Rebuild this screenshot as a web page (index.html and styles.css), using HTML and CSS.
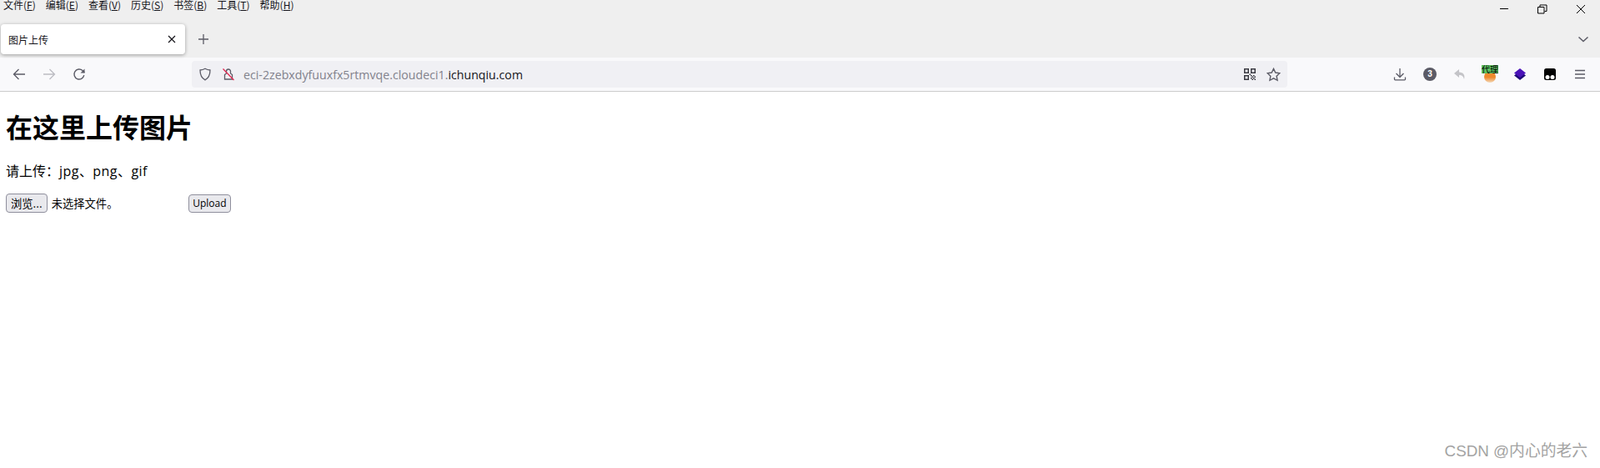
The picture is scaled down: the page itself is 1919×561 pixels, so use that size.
FILE: index.html
```html
<!DOCTYPE html>
<html lang="zh-CN">
<head>
    <meta charset="UTF-8">
    <title>图片上传</title>
    <link rel="stylesheet" href="styles.css">
</head>
<body>
    <header class="browser">
        <div class="menu-row">
            <nav class="menu">
                <span>文件(<u>F</u>)</span>
                <span>编辑(<u>E</u>)</span>
                <span>查看(<u>V</u>)</span>
                <span>历史(<u>S</u>)</span>
                <span>书签(<u>B</u>)</span>
                <span>工具(<u>T</u>)</span>
                <span>帮助(<u>H</u>)</span>
            </nav>
            <div class="win-controls">
                <svg width="12" height="12" viewBox="0 0 12 12"><path d="M1 5.500h10" stroke="#000" stroke-width="1" fill="none"/></svg>
                <svg width="12" height="12" viewBox="0 0 12 12" fill="none" stroke="#000"><path d="M.5 3.500h7.500v7.500h-7.500zM3 3V1h8v7.500H8.500"/></svg>
                <svg width="12" height="12" viewBox="0 0 12 12"><path d="M1 1l10 10M11 1L1 11" stroke="#000" fill="none"/></svg>
            </div>
        </div>
        <div class="tab-row">
            <div class="tab">
                <span class="tab-title">图片上传</span>
                <svg width="12" height="12" viewBox="0 0 12 12"><path d="M2 2l8 8M10 2l-8 8" stroke="#15141a" stroke-width="1.200" fill="none"/></svg>
            </div>
            <svg class="new-tab" width="14" height="14" viewBox="0 0 14 14"><path d="M7 1v12M1 7h12" stroke="#5b5b66" stroke-width="1.300" fill="none"/></svg>
            <svg class="tab-list" width="14" height="14" viewBox="0 0 14 14"><path d="M1.500 4.500L7 9.500l5.500-5" stroke="#5b5b66" stroke-width="1.500" fill="none"/></svg>
        </div>
        <div class="toolbar">
            <div class="nav-buttons">
                <svg width="16" height="16" viewBox="0 0 16 16" fill="none" stroke="#5b5b66" stroke-width="1.300"><path d="M15 8H1.500M7.500 2l-6 6 6 6"/></svg>
                <svg width="16" height="16" viewBox="0 0 16 16" fill="none" stroke="#bcbcc2" stroke-width="1.300"><path d="M1 8h13.500M8.500 2l6 6-6 6"/></svg>
                <svg width="16" height="16" viewBox="0 0 16 16" fill="none" stroke="#5b5b66" stroke-width="1.400"><path d="M13.800 9.200A6 6 0 1 1 12 3.600L14.500 6"/><path d="M14.500 1.500V6.500H9.500" fill="#5b5b66" stroke="none"/></svg>
            </div>
            <div class="urlbar">
                <svg width="16" height="16" viewBox="0 0 16 16" fill="none" stroke="#5b5b66" stroke-width="1.300"><path d="M8 1.200c2 1.200 4 1.700 6 1.800 0 5.500-1.500 9.500-6 11.800C3.500 12.500 2 8.500 2 3c2-.1 4-.6 6-1.800z"/></svg>
                <svg class="lock" width="16" height="16" viewBox="0 0 16 16" fill="none"><path d="M5.500 7V4.500a2.500 2.500 0 0 1 5 0V7l2 1.500V14h-9V8.500z" stroke="#5b5b66" stroke-width="1.300"/><path d="M1.500 1.500l13 13.500" stroke="#e22850" stroke-width="1.300"/></svg>
                <span class="url"><span class="url-dim">eci-2zebxdyfuuxfx5rtmvqe.cloudeci1.</span>ichunqiu.com</span>
                <svg class="qr" width="14" height="14" viewBox="0 0 14 14"><path d="M0 0h6v6H0zM1.500 1.500v3h3v-3zM8 0h6v6H8zM9.500 1.500v3h3v-3zM0 8h6v6H0zM1.500 9.500v3h3v-3zM8 8h1.500v1.500H8zM11 8h1.500v1.500H11zM9.500 9.500H11V11H9.500zM12.500 9.500H14V11h-1.500zM8 11h1.500v1.500H8zM11 11h1.500v1.500H11zM9.500 12.500H11V14H9.500zM12.500 12.500H14V14h-1.500zM6.500 6.500H8V8H6.500z" fill="#3a3a42" fill-rule="evenodd"/></svg>
                <svg class="star" width="17" height="17" viewBox="0 0 16 16"><path d="M8 1.300l2.100 4.400 4.800.6-3.500 3.300.9 4.800L8 12.100l-4.300 2.300.9-4.800L1.100 6.300l4.800-.6z" fill="none" stroke="#5b5b66" stroke-width="1.300"/></svg>
            </div>
            <div class="tools">
                <svg width="16" height="16" viewBox="0 0 16 16" fill="none" stroke="#5b5b66" stroke-width="1.300"><path d="M8 1v10M3.500 7L8 11.500 12.500 7M1.500 11.500v2.500a.8.8 0 0 0 .8.800h11.400a.8.8 0 0 0 .8-.8v-2.500"/></svg>
                <span class="badge">3</span>
                <svg width="16" height="16" viewBox="0 0 16 16"><path d="M7 2L1 7l6 5V9c3 0 5 1 6 5 1.500-5-1-8.500-6-8.500z" fill="#c4c4c8"/></svg>
                <span class="ext-proxy"><span class="ext-proxy-face"></span><span class="ext-proxy-label">代理</span></span>
                <svg width="16" height="16" viewBox="0 0 16 16"><path d="M8 4l7 5.500-7 5.500-7-5.500z" fill="#1f0a78"/><path d="M8 1l7 5.500-7 5.500-7-5.500z" fill="#4a12b8"/></svg>
                <svg width="16" height="16" viewBox="0 0 16 16"><rect x="1" y="1" width="14" height="14" rx="2.500" fill="#000"/><circle cx="5" cy="11.500" r="2.500" fill="#fff"/><circle cx="11" cy="11.500" r="2.500" fill="#fff"/></svg>
                <svg width="16" height="16" viewBox="0 0 16 16" fill="none" stroke="#5b5b66" stroke-width="1.300"><path d="M2 3.500h12M2 8h12M2 12.500h12"/></svg>
            </div>
        </div>
    </header>

    <main class="page">
        <h1>在这里上传图片</h1>
        <p>请上传：<span class="types">jpg、png、gif</span></p>
        <form class="upload-form">
            <button type="button" class="file-btn">浏览...</button>
            <span class="file-name">未选择文件。</span>
            <button type="button" class="upload-btn">Upload</button>
        </form>
    </main>

    <div class="watermark">CSDN @内心的老六</div>
</body>
</html>
```

FILE: styles.css
```css
html, body {
    height: 100%;
}
body {
    margin: 0;
    overflow: hidden;
    background-color: #fff;
    color: #000;
    font-family: "Noto Sans CJK SC", "Liberation Sans", sans-serif;
}
svg {
    display: block;
    flex: none;
}

/* browser chrome */
.browser {
    background-color: #efefef;
    font-size: 12px;
}
.menu-row {
    display: flex;
    justify-content: space-between;
    height: 29px;
}
.menu {
    display: flex;
    gap: 12px;
    padding-left: 4px;
    line-height: 12px;
    color: #15141a;
}
.win-controls {
    display: flex;
    gap: 34px;
    padding: 5px 17px 0 0;
}
.tab-row {
    display: flex;
    align-items: center;
    height: 40px;
    padding-bottom: 4px;
    box-sizing: border-box;
}
.tab {
    display: flex;
    align-items: center;
    justify-content: space-between;
    width: 221px;
    height: 36px;
    margin-left: 1px;
    padding: 0 10px 0 9px;
    box-sizing: border-box;
    background-color: #fff;
    border-radius: 4px;
    box-shadow: 0 1px 4px rgba(0, 0, 0, 0.35);
}
.tab-title {
    color: #15141a;
    font-size: 12px;
}
.new-tab {
    margin-left: 15px;
}
.tab-list {
    margin-left: auto;
    margin-right: 13px;
}
.toolbar {
    display: flex;
    align-items: center;
    height: 41px;
    box-sizing: border-box;
    background-color: #f9f9fb;
    border-bottom: 1px solid #ccc;
}
.nav-buttons {
    display: flex;
    gap: 20px;
    padding-left: 15px;
    width: 230px;
    box-sizing: border-box;
}
.urlbar {
    display: flex;
    align-items: center;
    width: 1314px;
    height: 32px;
    padding: 0 8px;
    box-sizing: border-box;
    background-color: #f0f0f4;
    border-radius: 4px;
}
.lock {
    margin-left: 12px;
}
.url {
    margin-left: 10px;
    flex: 1;
    font-family: "Open Sans", "Liberation Sans", sans-serif;
    font-size: 14.200px;
    color: #15141a;
    white-space: nowrap;
}
.url-dim {
    color: #82828c;
}
.star {
    margin-left: 13px;
}
.tools {
    display: flex;
    align-items: center;
    gap: 20px;
    padding-left: 127px;
}
.badge {
    flex: none;
    width: 16px;
    height: 16px;
    border-radius: 50%;
    background-color: #5b5b66;
    color: #fff;
    font: bold 10px/16px "Liberation Sans", sans-serif;
    text-align: center;
}
.ext-proxy {
    position: relative;
    flex: none;
    width: 20px;
    height: 22px;
    margin: 0 -2px;
}
.ext-proxy-face {
    position: absolute;
    left: 3px;
    top: 7px;
    width: 14px;
    height: 14px;
    border-radius: 50%;
    background: linear-gradient(#ee8a2e 55%, #f3d9b8);
}
.ext-proxy-label {
    position: absolute;
    left: 0;
    top: 0;
    width: 20px;
    height: 10px;
    background-color: #5cc060;
    font-size: 10px;
    line-height: 10px;
    white-space: nowrap;
}

/* page content */
.page {
    padding: 0 7px;
}
h1 {
    margin: 18px 0 19px;
    font-size: 32px;
    line-height: 46px;
    font-weight: bold;
}
p {
    margin: 0 0 15px;
    font-family: "Open Sans", "Noto Sans CJK SC", sans-serif;
    font-size: 16px;
    line-height: 24px;
}
.types {
    letter-spacing: 0.45px;
}
.upload-form {
    display: flex;
    align-items: center;
    font-size: 13.300px;
}
.file-btn, .upload-btn {
    height: 23px;
    padding: 0 5px;
    background-color: #e9e9ed;
    border: 1px solid #8f8f9d;
    border-radius: 4px;
    color: #000;
    font-family: "Noto Sans CJK SC", "Liberation Sans", sans-serif;
    font-size: 13.300px;
    line-height: 20px;
}
.file-name {
    width: 169px;
    padding-left: 5px;
    box-sizing: border-box;
}
.upload-btn {
    height: 22px;
    padding: 0 4.500px;
    font-family: "Open Sans", "Liberation Sans", sans-serif;
    font-size: 12px;
}

.watermark {
    position: absolute;
    right: 15px;
    bottom: 8px;
    color: #a3a3a3;
    font-family: "Liberation Sans", "Noto Sans CJK SC", sans-serif;
    font-size: 18.800px;
    line-height: 24px;
}
```
